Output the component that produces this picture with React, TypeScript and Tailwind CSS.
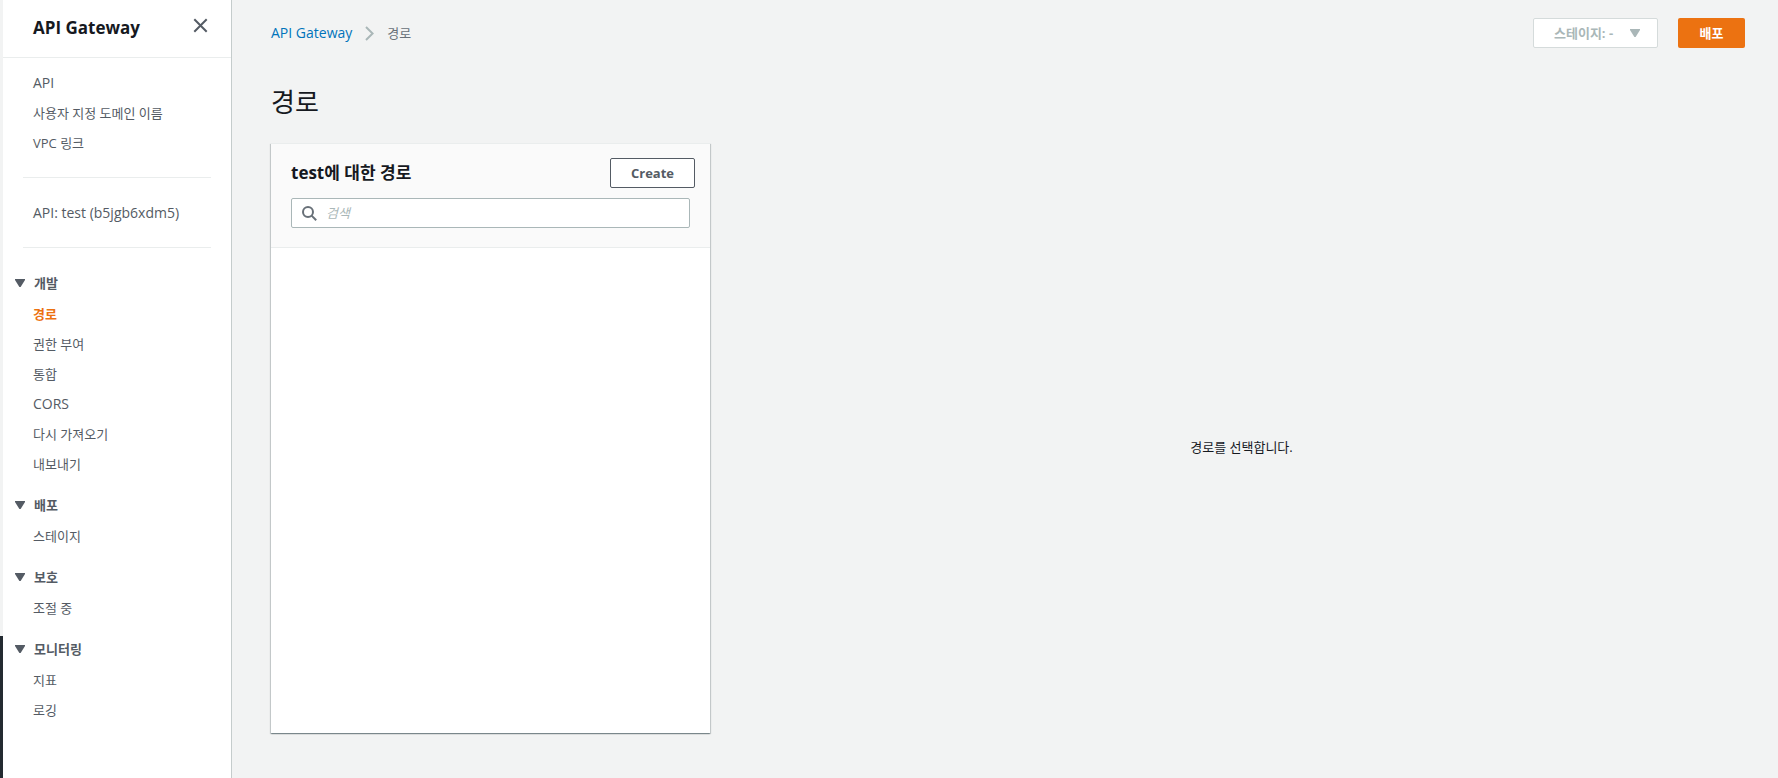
import React, { useState } from 'react';

interface NavSection {
    title: string;
    items: string[];
}

const topLinks = ['API', '사용자 지정 도메인 이름', 'VPC 링크'];

const sections: NavSection[] = [
    { title: '개발', items: ['경로', '권한 부여', '통합', 'CORS', '다시 가져오기', '내보내기'] },
    { title: '배포', items: ['스테이지'] },
    { title: '보호', items: ['조절 중'] },
    { title: '모니터링', items: ['지표', '로깅'] },
];

// Latin labels are set one step larger than Hangul ones
const isLatin = (label: string) => /^[\x20-\x7e]+$/.test(label);

const Caret = ({ className = '' }: { className?: string }) => (
    <svg className={className} width="10" height="8" viewBox="0 0 10 8" fill="currentColor" aria-hidden="true">
        <path d="M0 0H10V1L5.6 8H4.4L0 1Z" />
    </svg>
);

const NavLink = ({ label, active = false }: { label: string; active?: boolean }) => (
    <li className={isLatin(label) ? 'h-[30px] text-sm leading-5' : 'h-[30px]'}>
        <a href="#" className={active ? 'font-bold text-[#ec7211]' : 'hover:text-[#ec7211]'}>
            {label}
        </a>
    </li>
);

const NavGroup = ({ title, items }: NavSection) => {
    const [open, setOpen] = useState(true);

    return (
        <div className="mb-[11px]">
            <button
                type="button"
                aria-expanded={open}
                onClick={() => setOpen(!open)}
                className="flex h-[31px] items-start gap-[9px] pl-3 font-bold"
            >
                <span className="flex h-5 items-center">
                    <Caret className={open ? '' : '-rotate-90'} />
                </span>
                {title}
            </button>
            {open && (
                <ul className="pl-[30px]">
                    {items.map((item) => (
                        <NavLink key={item} label={item} active={item === '경로'} />
                    ))}
                </ul>
            )}
        </div>
    );
};

const Sidebar = () => (
    <aside className="w-[229px] shrink-0 border-r border-[#c5cccc] bg-white text-[#545b64]">
        <div className="flex h-[58px] items-start justify-between border-b border-[#eaeded] pt-4 pr-[23px] pl-[30px]">
            <h2 className="text-[17px] leading-6 font-bold text-[#16191f]">API Gateway</h2>
            <button type="button" aria-label="닫기" className="mt-[2px]">
                <svg width="15" height="15" viewBox="0 0 15 15" fill="none" stroke="currentColor" strokeWidth="2" aria-hidden="true">
                    <path d="M1.3 1.3L13.7 13.7M13.7 1.3L1.3 13.7" />
                </svg>
            </button>
        </div>

        <nav>
            <ul className="pt-[15px] pl-[30px]">
                {topLinks.map((label) => (
                    <NavLink key={label} label={label} />
                ))}
            </ul>
            <hr className="mt-[14px] mr-5 ml-5 border-[#eaeded]" />
            <p className="pt-[25px] pb-6 pl-[30px] text-sm leading-5">API: test (b5jgb6xdm5)</p>
            <hr className="mr-5 mb-[25px] ml-5 border-[#eaeded]" />
            {sections.map((section) => (
                <NavGroup key={section.title} {...section} />
            ))}
        </nav>
    </aside>
);

const RoutesPanel = () => (
    <section className="mb-[21px] w-[439px] shrink-0 border-t border-[#eaeded] bg-white shadow-[0_1px_1px_0_rgba(0,28,36,0.3),1px_1px_1px_0_rgba(0,28,36,0.15),-1px_1px_1px_0_rgba(0,28,36,0.15)]">
        <header className="border-b border-[#eaeded] bg-[#fafafa] pt-[14px] pb-[19px] pl-5">
            <div className="mb-[10px] flex items-center justify-between pr-[15px]">
                <h2 className="text-[17px] leading-6 font-bold text-[#16191f]">test에 대한 경로</h2>
                <button
                    type="button"
                    className="h-[30px] rounded-[2px] border border-[#545b64] bg-white px-5 font-bold text-[#545b64]"
                >
                    Create
                </button>
            </div>
            <label className="mr-5 flex h-[30px] items-center gap-[9px] rounded-[2px] border border-[#aab7b8] bg-white px-[10px]">
                <svg className="shrink-0 text-[#687078]" width="15" height="15" viewBox="0 0 15 15" fill="none" stroke="currentColor" strokeWidth="2" aria-hidden="true">
                    <circle cx="6" cy="6" r="5" />
                    <path d="M9.6 9.6L14.2 14.2" />
                </svg>
                <input
                    type="text"
                    aria-label="검색"
                    placeholder="검색"
                    className="min-w-0 flex-1 bg-transparent outline-none placeholder:text-[#aab7b8] placeholder:italic"
                />
            </label>
        </header>
    </section>
);

export default function App() {
    return (
        <div className="flex min-h-screen bg-[#f2f3f3] font-['Open_Sans','Noto_Sans_CJK_KR',sans-serif] text-[13px] leading-5 text-[#16191f]">
            {/* Edge of the page behind the navigation */}
            <div className="flex w-[3px] shrink-0 flex-col justify-end">
                <div className="h-[142px] bg-[#232a31]"></div>
            </div>

            <Sidebar />

            <main className="flex min-w-0 flex-1 flex-col pt-[18px] pr-[33px] pb-6 pl-[39px]">
                <div className="flex items-center justify-between">
                    <nav aria-label="이동 경로" className="flex items-center gap-[13px]">
                        <a href="#" className="text-sm leading-5 text-[#0073bb] hover:underline">API Gateway</a>
                        <svg width="9" height="15" viewBox="0 0 9 15" fill="none" stroke="#aab7b8" strokeWidth="2" aria-hidden="true">
                            <path d="M1 1L7.6 7.5L1 14" />
                        </svg>
                        <span className="text-[#687078]">경로</span>
                    </nav>
                    <div className="flex gap-5">
                        <div className="relative text-[#aab7b8]">
                            <select
                                disabled
                                aria-label="스테이지"
                                className="h-[30px] w-[125px] appearance-none rounded-[2px] border border-[#d5dbdb] bg-white pl-5 font-bold opacity-100"
                            >
                                <option>스테이지: -</option>
                            </select>
                            <Caret className="pointer-events-none absolute top-[11px] right-[18px]" />
                        </div>
                        <button type="button" className="h-[30px] w-[67px] rounded-[2px] bg-[#ec7211] font-bold text-white">
                            배포
                        </button>
                    </div>
                </div>

                <h1 className="mt-9 mb-[23px] text-[26px] leading-9">경로</h1>

                <div className="flex flex-1 gap-7">
                    <RoutesPanel />
                    <div className="flex flex-1 items-center justify-center pb-1">
                        <p>경로를 선택합니다.</p>
                    </div>
                </div>
            </main>
        </div>
    );
}
